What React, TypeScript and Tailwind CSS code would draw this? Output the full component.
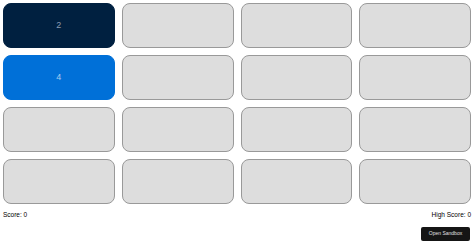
import React from "react";

const tiles: (number | null)[] = [2, null, null, null, 4, null, null, null, null, null, null, null, null, null, null, null];

export default function App() {
  return (
    <div className="w-[474px] h-[248px] bg-white relative" style={{ fontFamily: '"Liberation Sans", Arial, sans-serif' }}>
      <div className="grid grid-cols-4 gap-x-[7px] gap-y-[7px] pl-[3px] pr-[3px] pt-[3px]">
        {tiles.map((v, i) => {
          let cls = "h-[45px] rounded-[8px] flex items-center justify-center text-[9px] ";
          if (v === 2) cls += "bg-[#002040] text-[#8a9bb2] border border-[#002040]";
          else if (v === 4) cls += "bg-[#0070d8] text-[#a8ccf0] border border-[#0070d8]";
          else cls += "bg-[#dddddd] border border-[#999999]";
          return (
            <div key={i} className={cls}>
              {v ?? ""}
            </div>
          );
        })}
      </div>
      <div className="flex justify-between px-[3px] mt-[6px] text-[6.5px] leading-[9px] text-black">
        <span>Score: 0</span>
        <span>High Score: 0</span>
      </div>
      <div className="absolute right-[4px] top-[227px] w-[49px] h-[14px] rounded-[2px] bg-[#151515] text-[#e0e0e0] text-[5px] flex items-center justify-center">
        Open Sandbox
      </div>
    </div>
  );
}
